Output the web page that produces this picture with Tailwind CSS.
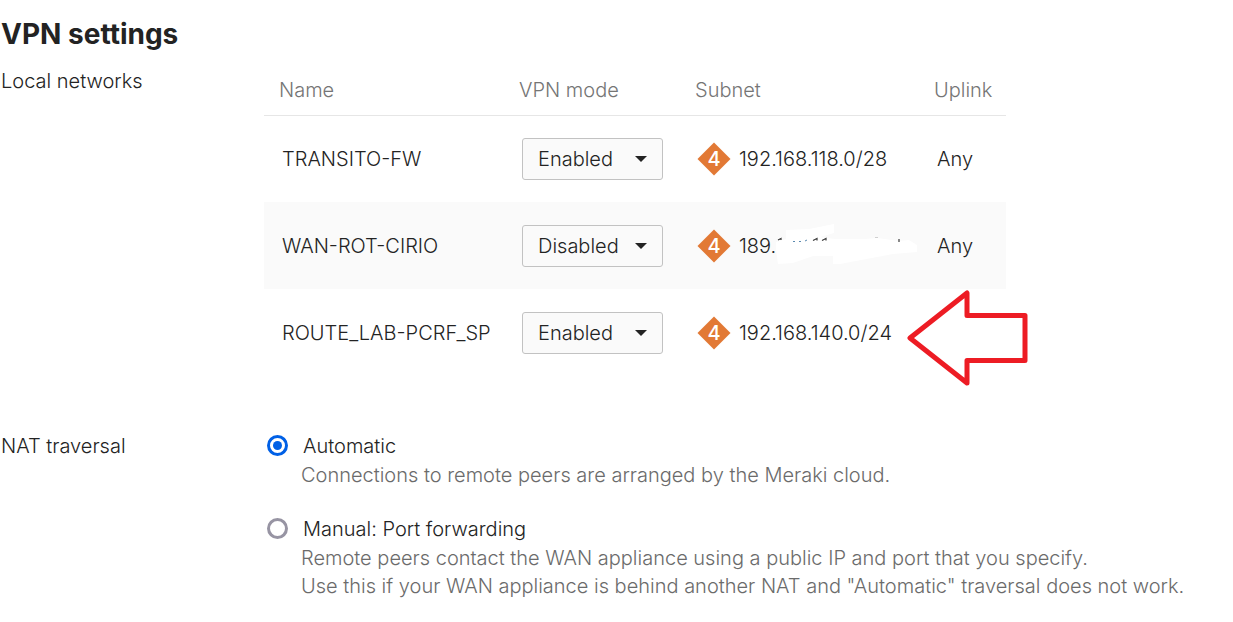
<!DOCTYPE html>
<html lang="en">
<head>
  <meta charset="UTF-8">
  <meta name="viewport" content="width=device-width, initial-scale=1.0">
  <title>VPN settings</title>
  <script src="https://cdn.jsdelivr.net/npm/@tailwindcss/browser@4"></script>
</head>
<body class="bg-white font-['Inter',sans-serif] text-[20px] leading-7 font-light text-[#232323]">
  <main class="pt-4">
    <h1 class="pl-px text-[28px] leading-9 font-bold">VPN settings</h1>

    <!-- Local networks -->
    <section class="grid grid-cols-[264px_1fr] pt-3.5">
      <h2 class="pl-px pt-px">Local networks</h2>
      <div class="relative w-full max-w-[742px]">
        <table class="w-full table-fixed border-collapse text-left">
          <thead>
            <tr class="h-[49px] border-b border-[#e6e6e6] text-[#757575]">
              <th class="w-[240px] pl-[15px] font-light">Name</th>
              <th class="w-[176px] pl-[15px] font-light">VPN mode</th>
              <th class="w-[239px] pl-[15px] font-light">Subnet</th>
              <th class="pl-[15px] font-light">Uplink</th>
            </tr>
          </thead>
          <tbody>
            <tr class="h-[87px]">
              <td class="pl-[18px]">TRANSITO-FW</td>
              <td class="pl-[18px]">
                <div class="relative w-[141px]">
                  <select aria-label="VPN mode for TRANSITO-FW" class="block h-[42px] w-full appearance-none rounded-[3px] border border-[#c2c2c2] bg-[#fafafa] pl-[15px] font-light">
                    <option selected>Enabled</option>
                    <option>Disabled</option>
                  </select>
                  <svg class="pointer-events-none absolute top-[18px] right-4 h-1.5 w-3" viewBox="0 0 12 6" fill="#232323"><path d="M0 0h12L6 6z"/></svg>
                </div>
              </td>
              <td class="pl-[17px]">
                <div class="flex items-center gap-2">
                  <svg class="h-[34px] w-[34px] shrink-0" viewBox="0 0 34 34"><path d="M17 .5L33.500 17L17 33.500L.5 17z" fill="#e27935"/><text x="17" y="24" text-anchor="middle" font-size="20" font-weight="500" fill="#fff">4</text></svg>
                  <span>192.168.118.0/28</span>
                </div>
              </td>
              <td class="pl-[18px]">Any</td>
            </tr>
            <tr class="h-[87px] bg-[#fafafa]">
              <td class="pl-[18px]">WAN-ROT-CIRIO</td>
              <td class="pl-[18px]">
                <div class="relative w-[141px]">
                  <select aria-label="VPN mode for WAN-ROT-CIRIO" class="block h-[42px] w-full appearance-none rounded-[3px] border border-[#c2c2c2] bg-[#fafafa] pl-[15px] font-light">
                    <option>Enabled</option>
                    <option selected>Disabled</option>
                  </select>
                  <svg class="pointer-events-none absolute top-[18px] right-4 h-1.5 w-3" viewBox="0 0 12 6" fill="#232323"><path d="M0 0h12L6 6z"/></svg>
                </div>
              </td>
              <td class="pl-[17px]">
                <div class="relative flex items-center gap-2">
                  <svg class="h-[34px] w-[34px] shrink-0" viewBox="0 0 34 34"><path d="M17 .5L33.500 17L17 33.500L.5 17z" fill="#e27935"/><text x="17" y="24" text-anchor="middle" font-size="20" font-weight="500" fill="#fff">4</text></svg>
                  <span>189.</span>
                  <!-- Erased part of the address -->
                  <svg class="absolute -top-1.5 left-[78px] h-[42px] w-[144px]" viewBox="0 0 144 42">
                    <path d="M11 7L34 6L59 1V10L45 14L60 16H90L102 15L124 18L134 17L142 22V29L118 31L65 41H58V33H38L18 40L3 41L1 27V19L11 16z" fill="#fff"/>
                    <path d="M3 17l3-1.500V17M38 17.500l4-2v2M47 17.500l4-2v2M124 16v3" fill="none" stroke="#3c3c3c" stroke-width="1.200"/>
                    <path d="M18 18.500h2M24 18.500h2M30 18l2-1" fill="none" stroke="#5b8ab0"/>
                    <path d="M100 14.500h3" stroke="#d0d0d0"/>
                  </svg>
                </div>
              </td>
              <td class="pl-[18px]">Any</td>
            </tr>
            <tr class="h-[87px]">
              <td class="pl-[18px]">ROUTE_LAB-PCRF_SP</td>
              <td class="pl-[18px]">
                <div class="relative w-[141px]">
                  <select aria-label="VPN mode for ROUTE_LAB-PCRF_SP" class="block h-[42px] w-full appearance-none rounded-[3px] border border-[#c2c2c2] bg-[#fafafa] pl-[15px] font-light">
                    <option selected>Enabled</option>
                    <option>Disabled</option>
                  </select>
                  <svg class="pointer-events-none absolute top-[18px] right-4 h-1.5 w-3" viewBox="0 0 12 6" fill="#232323"><path d="M0 0h12L6 6z"/></svg>
                </div>
              </td>
              <td class="pl-[17px]">
                <div class="flex items-center gap-2">
                  <svg class="h-[34px] w-[34px] shrink-0" viewBox="0 0 34 34"><path d="M17 .5L33.500 17L17 33.500L.5 17z" fill="#e27935"/><text x="17" y="24" text-anchor="middle" font-size="20" font-weight="500" fill="#fff">4</text></svg>
                  <span>192.168.140.0/24</span>
                </div>
              </td>
              <td></td>
            </tr>
          </tbody>
        </table>
        <!-- Arrow pointing at the last route -->
        <svg class="absolute -right-[22px] -bottom-2.5 h-24 w-[122px]" viewBox="0 0 122 96" fill="none" stroke="#ed1c24" stroke-width="5" stroke-linejoin="round"><path d="M4 48L61 3V25.500H119V70.500H61V93z"/></svg>
      </div>
    </section>

    <!-- NAT traversal -->
    <section class="grid grid-cols-[264px_1fr] pt-14">
      <h2 class="pl-px">NAT traversal</h2>
      <div class="flex flex-col gap-[26px] pl-[3px]">
        <div class="grid grid-cols-[34px_1fr]">
          <input type="radio" name="nat" id="nat-auto" checked aria-describedby="nat-auto-hint" class="mt-[3px] h-[21px] w-[21px] appearance-none rounded-full border-[3px] border-[#9794a3] p-[3px] checked:border-[#0060e6] checked:bg-[#0060e6] checked:bg-clip-content">
          <label for="nat-auto" class="pl-0.5">Automatic</label>
          <p id="nat-auto-hint" class="col-start-2 pt-px text-[#6b6b6b]">Connections to remote peers are arranged by the Meraki cloud.</p>
        </div>
        <div class="grid grid-cols-[34px_1fr]">
          <input type="radio" name="nat" id="nat-manual" aria-describedby="nat-manual-hint" class="mt-[3px] h-[21px] w-[21px] appearance-none rounded-full border-[3px] border-[#9794a3] p-[3px] checked:border-[#0060e6] checked:bg-[#0060e6] checked:bg-clip-content">
          <label for="nat-manual" class="pl-0.5">Manual: Port forwarding</label>
          <p id="nat-manual-hint" class="col-start-2 pt-px text-[#6b6b6b]">Remote peers contact the WAN appliance using a public IP and port that you specify.<br>Use this if your WAN appliance is behind another NAT and "Automatic" traversal does not work.</p>
        </div>
      </div>
    </section>
  </main>
</body>
</html>
